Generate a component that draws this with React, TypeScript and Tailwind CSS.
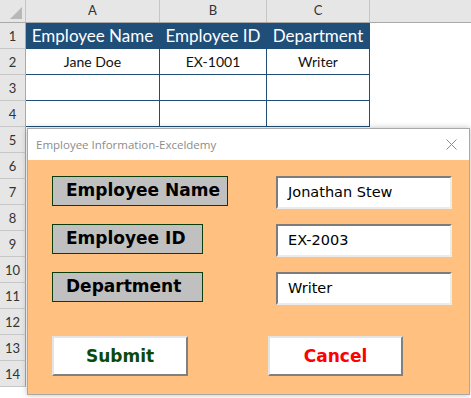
import React from 'react'

const rowNums = [1, 2, 3, 4, 5, 6, 7, 8, 9, 10, 11, 12, 13, 14]

const Sheet = () => {
  return (
    <div className="flex flex-col font-['Lato',sans-serif]">
      {/* column header */}
      <div className="flex h-[23px] bg-[#e6e6e6] border-b border-[#a9a9a9] text-[13px] text-[#333]">
        <div className="w-[26px] shrink-0 border-r border-[#c6c6c6] flex items-end justify-end pr-[3px] pb-[3px]">
          <svg width="12" height="12" viewBox="0 0 12 12">
            <polygon points="12,0 12,12 0,12" fill="#b8b8b8" />
          </svg>
        </div>
        <div className="w-[134px] shrink-0 border-r border-[#c6c6c6] flex items-center justify-center">A</div>
        <div className="w-[107px] shrink-0 border-r border-[#c6c6c6] flex items-center justify-center">B</div>
        <div className="w-[103px] shrink-0 border-r border-[#c6c6c6] flex items-center justify-center">C</div>
        <div className="flex-1" />
      </div>
      {rowNums.map((n) => (
        <div key={n} className="flex h-[26px]">
          <div className="w-[26px] shrink-0 bg-[#e6e6e6] border-r border-b border-[#c6c6c6] border-r-[#a9a9a9] flex items-center justify-center pt-[2px] text-[13px] text-[#333]">
            {n}
          </div>
          {n === 1 ? (
            <>
              <Cell w="w-[134px]" head>Employee Name</Cell>
              <Cell w="w-[107px]" head>Employee ID</Cell>
              <Cell w="w-[103px]" head>Department</Cell>
            </>
          ) : n <= 4 ? (
            <>
              <Cell w="w-[134px]">{n === 2 ? 'Jane Doe' : ''}</Cell>
              <Cell w="w-[107px]">{n === 2 ? 'EX-1001' : ''}</Cell>
              <Cell w="w-[103px]">{n === 2 ? 'Writer' : ''}</Cell>
            </>
          ) : null}
          <div className="flex-1" />
        </div>
      ))}
    </div>
  )
}

const Cell = ({ w, head, children }: { w: string; head?: boolean; children?: React.ReactNode }) => {
  return (
    <div
      className={`${w} shrink-0 flex items-center justify-center border-r border-b border-[#1f4e78] ${
        head ? 'bg-[#1f4e78] text-white text-[17px]' : 'bg-white text-[#111] text-[14px]'
      }`}
    >
      {children}
    </div>
  )
}

const Label = ({ w, children }: { w: string; children: React.ReactNode }) => (
  <div className={`${w} h-[30px] bg-[#c0c0c0] border border-[#0b3d0b] flex items-center pl-[13px] font-bold text-[17px] text-black`}>
    {children}
  </div>
)

const TextBox = ({ value }: { value: string }) => (
  <div className="w-[176px] h-[33px] bg-white border-2 border-t-[#7c7c7c] border-l-[#7c7c7c] border-b-[#ececec] border-r-[#ececec] flex items-center pl-[10px] text-[14.5px] text-black">
    {value}
  </div>
)

const Dialog = () => {
  return (
    <div className="absolute left-[27px] top-[128px] w-[443px] h-[267px] border border-[#a8a8a8] bg-[#ffc080] shadow-[0_0_6px_rgba(0,0,0,0.25)] flex flex-col font-['DejaVu_Sans',sans-serif]">
      <div className="h-[31px] bg-white flex items-center justify-between pl-[8px] pr-[12px]">
        <span className="font-['Open_Sans',sans-serif] text-[11.5px] text-[#8c8c8c]">Employee Information-Exceldemy</span>
        <svg width="11" height="11" viewBox="0 0 11 11">
          <path d="M0.5 0.5 L10.5 10.5 M10.5 0.5 L0.5 10.5" stroke="#8a8a8a" strokeWidth="1" />
        </svg>
      </div>
      <div className="flex flex-col pl-[24px] pt-[16px]">
        <div className="flex flex-col gap-[15px]">
          <div className="grid grid-cols-[224px_176px] items-start">
            <Label w="w-[176px]">Employee Name</Label>
            <TextBox value="Jonathan Stew" />
          </div>
          <div className="grid grid-cols-[224px_176px] items-start">
            <Label w="w-[151px]">Employee ID</Label>
            <TextBox value="EX-2003" />
          </div>
          <div className="grid grid-cols-[224px_176px] items-start">
            <Label w="w-[151px]">Department</Label>
            <TextBox value="Writer" />
          </div>
        </div>
        <div className="flex gap-[80px] mt-[31px]">
          <button className="w-[136px] h-[40px] bg-white border-2 border-t-[#e4e4e4] border-l-[#e4e4e4] border-b-[#808080] border-r-[#808080] pt-[2px] font-bold text-[17px] text-[#0a4a0a]">
            Submit
          </button>
          <button className="w-[135px] h-[40px] bg-white border-2 border-t-[#e4e4e4] border-l-[#e4e4e4] border-b-[#808080] border-r-[#808080] pt-[2px] font-bold text-[17px] text-[#ff0000]">
            Cancel
          </button>
        </div>
      </div>
    </div>
  )
}

export default function App() {
  return (
    <div className="relative w-[471px] h-[398px] overflow-hidden bg-white">
      <Sheet />
      <Dialog />
    </div>
  )
}
